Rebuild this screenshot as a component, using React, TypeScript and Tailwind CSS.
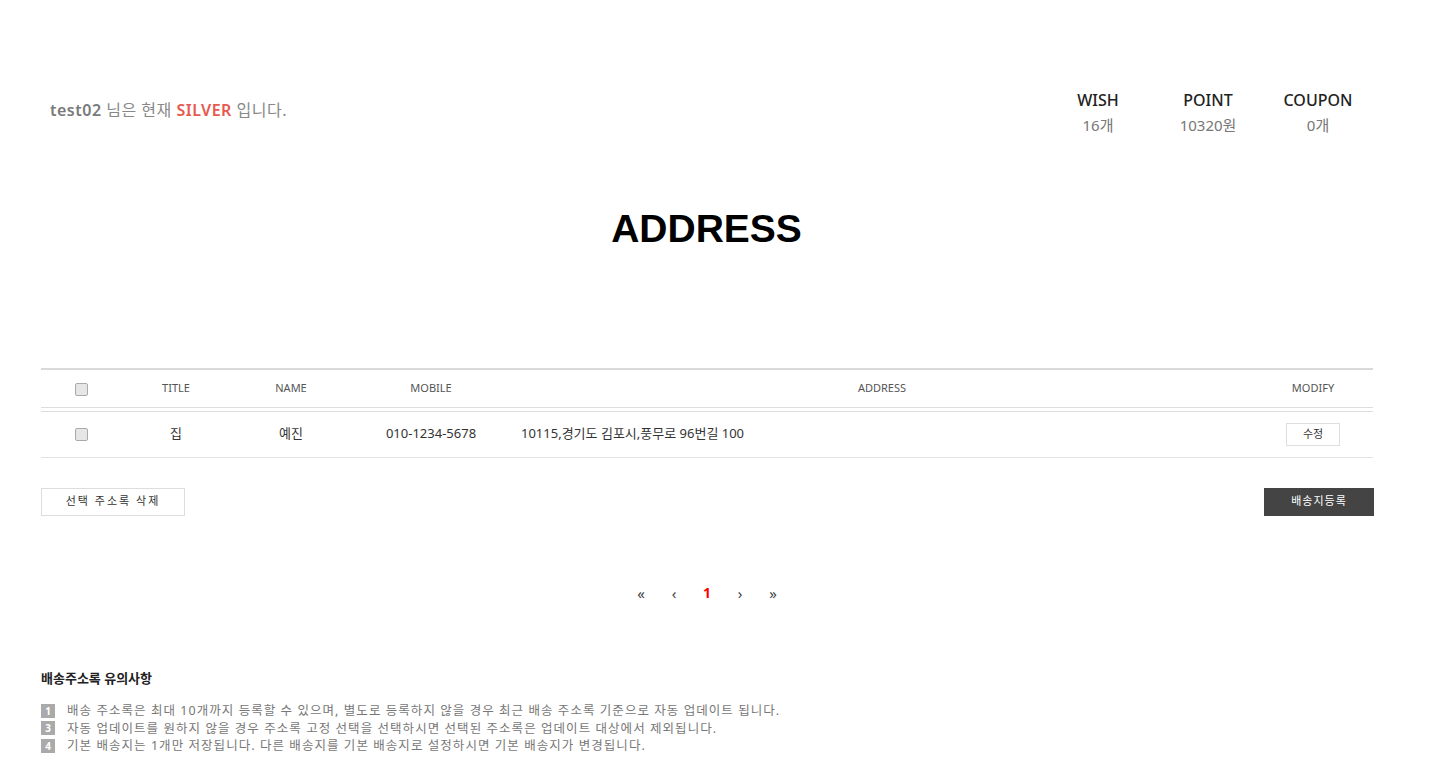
const font = { fontFamily: '"Noto Sans", "Noto Sans CJK KR", sans-serif' };

const notes = [
  { n: '1', t: '배송 주소록은 최대 10개까지 등록할 수 있으며, 별도로 등록하지 않을 경우 최근 배송 주소록 기준으로 자동 업데이트 됩니다.' },
  { n: '3', t: '자동 업데이트를 원하지 않을 경우 주소록 고정 선택을 선택하시면 선택된 주소록은 업데이트 대상에서 제외됩니다.' },
  { n: '4', t: '기본 배송지는 1개만 저장됩니다. 다른 배송지를 기본 배송지로 설정하시면 기본 배송지가 변경됩니다.' },
];

const Stat = ({ label, value }: { label: string; value: string }) => (
  <div className="w-[110px] flex flex-col items-center">
    <span className="text-[16px] leading-[20px] font-medium text-[#222]">{label}</span>
    <span className="text-[15px] leading-[20px] mt-[5px] text-[#777]">{value}</span>
  </div>
);

const Check = () => (
  <input
    type="checkbox"
    className="appearance-none w-[13px] h-[13px] rounded-[2px] border border-[#aaa] bg-[#e6e6e6] align-middle checked:bg-[#999]"
  />
);

export default function App() {
  return (
    <div className="min-h-screen bg-white" style={font}>
      <div className="ml-[41px] w-[1332px]">
        {/* member summary */}
        <div className="flex justify-between items-start pt-[90px]">
          <p className="pl-[9px] pt-[10px] text-[16px] leading-[20px] tracking-[0.5px] text-[#888]">
            <span className="font-semibold text-[#7a7a7a]">test02</span> 님은 현재{' '}
            <span className="font-semibold text-[#e8584f]">SILVER</span> 입니다.
          </p>
          <div className="flex">
            <Stat label="WISH" value="16개" />
            <Stat label="POINT" value="10320원" />
            <Stat label="COUPON" value="0개" />
          </div>
        </div>

        <h2
          className="text-center text-[39px] leading-[44px] font-bold text-black mt-[72px] -ml-[1px]"
          style={{ fontFamily: '"Liberation Sans", Arial, sans-serif' }}
        >
          ADDRESS
        </h2>

        {/* address table */}
        <table className="w-full mt-[117px] border-collapse border-t-2 border-[#d9d9d9]">
          <colgroup>
            <col className="w-[80px]" />
            <col className="w-[110px]" />
            <col className="w-[120px]" />
            <col className="w-[160px]" />
            <col />
            <col className="w-[120px]" />
          </colgroup>
          <thead>
            <tr className="h-[38px] text-[11px] text-[#555] border-b border-[#ddd]">
              <th className="font-normal"><Check /></th>
              <th className="font-normal">TITLE</th>
              <th className="font-normal">NAME</th>
              <th className="font-normal">MOBILE</th>
              <th className="font-normal">ADDRESS</th>
              <th className="font-normal">MODIFY</th>
            </tr>
          </thead>
          <tbody>
            <tr>
              <td colSpan={6} className="h-[4px] p-0 border-b border-[#ddd]" />
            </tr>
            <tr className="h-[46px] text-[13px] text-[#333] border-b border-[#e2e2e2]">
              <td className="text-center"><Check /></td>
              <td className="text-center">집</td>
              <td className="text-center">예진</td>
              <td className="text-center">010-1234-5678</td>
              <td className="pl-[10px]">10115,경기도 김포시,풍무로 96번길 100</td>
              <td className="text-center">
                <button className="w-[54px] h-[23px] border border-[#ddd] text-[11px] text-[#333] bg-white">수정</button>
              </td>
            </tr>
          </tbody>
        </table>

        <div className="flex justify-between mt-[30px]">
          <button className="w-[144px] h-[28px] border border-[#ddd] bg-white text-[11px] tracking-[2px] text-[#333]">
            선택 주소록 삭제
          </button>
          <button className="w-[110px] h-[28px] bg-[#444] text-white text-[11px] tracking-[1px] -mr-[1px]">배송지등록</button>
        </div>

        {/* pagination */}
        <div className="flex justify-center items-center gap-[16px] mt-[66px] text-[15px] text-[#444]">
          <span className="w-[17px] text-center">«</span>
          <span className="w-[17px] text-center">‹</span>
          <span className="w-[17px] text-center text-[14px] font-bold text-[#ff0000]">1</span>
          <span className="w-[17px] text-center">›</span>
          <span className="w-[17px] text-center">»</span>
        </div>

        {/* notes */}
        <div className="mt-[64px] pb-[20px]">
          <h3 className="text-[13px] font-bold text-[#222] leading-[20px]">배송주소록 유의사항</h3>
          <ul className="mt-[14px]">
            {notes.map((item) => (
              <li key={item.n} className="flex items-center text-[12.5px] tracking-[1.05px] leading-[17.5px] text-[#777]">
                <span className="w-[14px] h-[14px] bg-[#aaa] text-white text-[10px] tracking-normal font-bold leading-[14px] text-center mr-[12px]">
                  {item.n}
                </span>
                {item.t}
              </li>
            ))}
          </ul>
        </div>
      </div>
    </div>
  );
}
